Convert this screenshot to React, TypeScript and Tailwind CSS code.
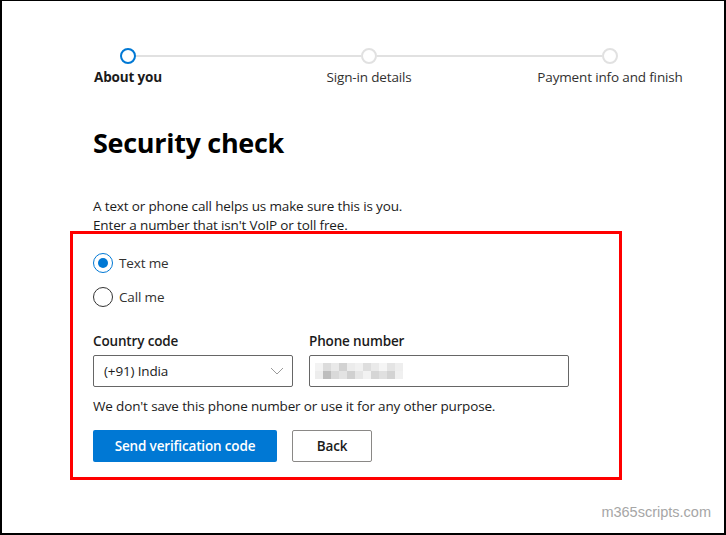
import React from "react";

const font = { fontFamily: '"Segoe UI", "Open Sans", "Noto Sans", sans-serif' };

function Step({ label, active, first, last, width, bold }: { label: string; active?: boolean; first?: boolean; last?: boolean; width: string; bold?: boolean }) {
  return (
    <div className={`flex flex-col items-center shrink-0 ${width}`}>
      <div className="flex items-center w-full h-[16px]">
        <div className={`flex-1 h-[2px] ${first ? "bg-transparent" : "bg-[#e1e1e1]"}`} />
        <div className={`w-[16px] h-[16px] rounded-full border-2 shrink-0 ${active ? "border-[#0078d4]" : "border-[#e1e1e1]"}`} />
        <div className={`flex-1 h-[2px] ${last ? "bg-transparent" : "bg-[#e1e1e1]"}`} />
      </div>
      <div className={`mt-[4px] whitespace-nowrap text-[13.5px] tracking-[-0.15px] leading-[18px] ${bold ? "font-bold text-[#1b1b1b]" : "text-[#323130]"}`}>{label}</div>
    </div>
  );
}

function Connector({ width }: { width: string }) {
  return (
    <div className={`h-[16px] flex items-center shrink-0 ${width}`}>
      <div className="w-full h-[2px] bg-[#e1e1e1]" />
    </div>
  );
}

export default function App() {
  const blur = [
    ["#f3f3f3", "#dcdcdc", "#e9e9e9", "#d2d2d2", "#ececec", "#f1f1f1", "#dedede", "#eaeaea", "#f5f5f5", "#e4e4e4", "#eeeeee"],
    ["#ededed", "#bdbdbd", "#d9d9d9", "#e3e3e3", "#d0d0d0", "#e6e6e6", "#f2f2f2", "#d6d6d6", "#e0e0e0", "#d3d3d3", "#f0f0f0"],
  ];
  const body = "text-[13.5px] tracking-[-0.15px]";
  return (
    <div className="w-[726px] h-[535px] bg-white border-t border-l-2 border-r-2 border-b-2 border-black relative overflow-hidden" style={font}>
      <div className="pl-[68px] pt-[47px]">
        <div className="pl-[23px]">
          <div className="flex w-[590px]">
            <Step label="About you" active first bold width="w-[70px]" />
            <Connector width="w-[161px]" />
            <Step label="Sign-in details" width="w-[90px]" />
            <Connector width="w-[123px]" />
            <Step label="Payment info and finish" last width="w-[146px]" />
          </div>
          <h1 className="mt-[39px] text-[27px] leading-[36px] font-bold text-black tracking-[-0.3px]">Security check</h1>
          <div className={`mt-[36px] ${body} leading-[19px] text-[#1b1b1b]`}>
            <p>A text or phone call helps us make sure this is you.</p>
            <p>Enter a number that isn't VoIP or toll free.</p>
          </div>
        </div>
        <div className="-mt-[4px] w-[552px] border-[3px] border-[#ff0000] pl-[20px] pt-[19px] pb-[15px]">
          <div className="flex items-center gap-[6px] h-[20px]">
            <div className="w-[20px] h-[20px] rounded-full border-[1.5px] border-[#0078d4] flex items-center justify-center">
              <div className="w-[10px] h-[10px] rounded-full bg-[#0078d4]" />
            </div>
            <span className={`${body} text-[#323130]`}>Text me</span>
          </div>
          <div className="flex items-center gap-[6px] h-[20px] mt-[14px]">
            <div className="w-[20px] h-[20px] rounded-full border border-[#333333]" />
            <span className={`${body} text-[#323130]`}>Call me</span>
          </div>
          <div className="flex gap-[16px] mt-[24px]">
            <div className="w-[200px]">
              <div className={`${body} leading-[20px] font-semibold text-[#1b1b1b]`}>Country code</div>
              <div className="mt-[4px] h-[32px] border border-[#666666] rounded-[2px] flex items-center justify-between pl-[10px] pr-[8px]">
                <span className={`${body} text-[#1b1b1b]`}>(+91) India</span>
                <svg width="14" height="8" viewBox="0 0 14 8" fill="none">
                  <path d="M1 1l6 6 6-6" stroke="#9a9a9a" strokeWidth="1" />
                </svg>
              </div>
            </div>
            <div className="w-[260px]">
              <div className={`${body} leading-[20px] font-semibold text-[#1b1b1b]`}>Phone number</div>
              <div className="mt-[4px] h-[32px] border border-[#666666] rounded-[2px] flex items-center pl-[5px]">
                <div className="flex flex-col">
                  {blur.map((row, i) => (
                    <div key={i} className="flex">
                      {row.map((c, j) => (
                        <div key={j} className="w-[8px] h-[8px]" style={{ background: c }} />
                      ))}
                    </div>
                  ))}
                </div>
              </div>
            </div>
          </div>
          <div className={`mt-[9px] ${body} leading-[20px] text-[#1b1b1b]`}>We don't save this phone number or use it for any other purpose.</div>
          <div className="flex gap-[15px] mt-[14px]">
            <button className={`w-[184px] h-[32px] bg-[#0078d4] text-white ${body} font-semibold rounded-[2px]`}>Send verification code</button>
            <button className={`w-[80px] h-[32px] bg-white border border-[#8a8886] text-[#1b1b1b] ${body} font-semibold rounded-[2px]`}>Back</button>
          </div>
        </div>
      </div>
      <div className="absolute right-[13px] bottom-[9px] text-[14.5px] text-[#a6a6a6]" style={{ fontFamily: '"Liberation Sans", Arial, sans-serif' }}>m365scripts.com</div>
    </div>
  );
}
